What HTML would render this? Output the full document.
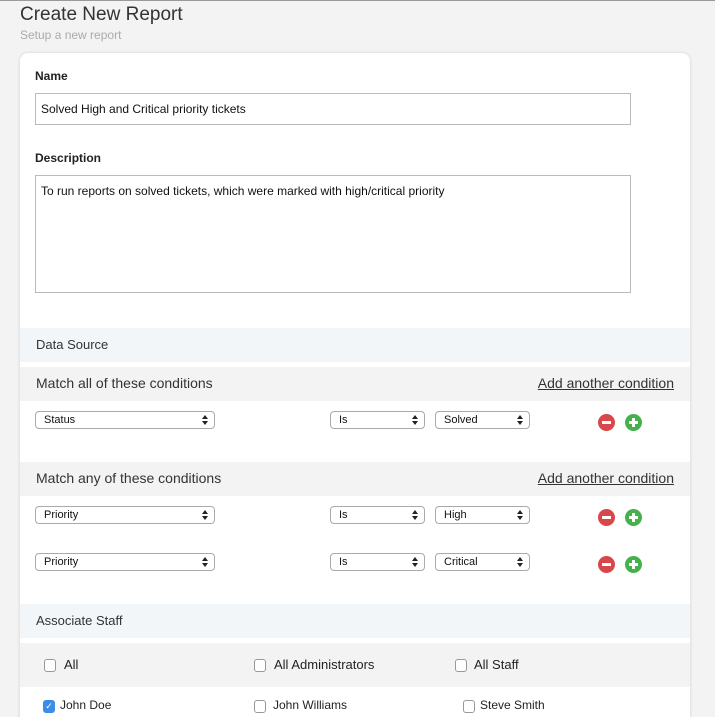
<!DOCTYPE html>
<html style="overflow:hidden;height:717px"><head><style>
*{box-sizing:border-box;margin:0;padding:0}
body{width:715px;height:717px;overflow:hidden;background:#f3f3f3;font-family:"Liberation Sans",sans-serif;position:relative;border-top:1px solid #9a9a9a}
.a{position:absolute}
h1{position:absolute;left:20px;top:3px;font-size:19px;font-weight:normal;color:#333}
.sub{left:20px;top:27px;font-size:12px;color:#aaa}
.card{left:20px;top:52px;width:670px;height:700px;background:#fff;border-radius:8px;box-shadow:0 0 3px rgba(0,0,0,.15)}
.lbl{font-size:12px;font-weight:bold;color:#222}
.inp{border:1px solid #bbb;background:#fff;font-size:12px;color:#111;padding:8px 5px}
.band{left:20px;width:670px;height:34px;font-size:13px;color:#333;padding:9px 16px}
.band.m{font-size:14px;padding-top:8px}
.blue{background:#f2f6f8}.grey{background:#f3f3f3}
.link{right:16px;top:8px;text-decoration:underline;color:#333}
.sel{height:18px;border:1px solid #aaa;border-radius:4px;font-size:11px;color:#111;padding:2px 8px;background:#fff}
.sel:after{content:"";position:absolute;right:6px;top:3px;border:3px solid transparent;border-bottom:4px solid #222;border-top:none}
.sel:before{content:"";position:absolute;right:6px;top:9px;border:3px solid transparent;border-top:4px solid #222;border-bottom:none}
.ic{width:17px;height:17px;border-radius:50%}
.ic.r{background:#d9474b}.ic.g{background:#44b14a}
.ic i{position:absolute;left:4px;top:7px;width:9px;height:3px;background:#fff}
.ic b{position:absolute;left:7px;top:4px;width:3px;height:9px;background:#fff}
.cb{width:12px;height:13px;border:1px solid #999;border-radius:3px;background:#fff}
.ck{font-size:12px;color:#222}
</style></head><body>
<h1>Create New Report</h1>
<div class="a sub">Setup a new report</div>
<div class="a card"></div>
<div class="a lbl" style="left:35px;top:68px">Name</div>
<div class="a inp" style="left:35px;top:92px;width:596px;height:32px">Solved High and Critical priority tickets</div>
<div class="a lbl" style="left:35px;top:150px">Description</div>
<div class="a inp" style="left:35px;top:174px;width:596px;height:118px">To run reports on solved tickets, which were marked with high/critical priority</div>
<div class="a band blue" style="top:327px">Data Source</div>
<div class="a band grey m" style="top:366px">Match all of these conditions<span class="a link">Add another condition</span></div>
<div class="a band grey m" style="top:461px">Match any of these conditions<span class="a link">Add another condition</span></div>

<div class="a sel" style="left:35px;top:410px;width:180px">Status</div>
<div class="a sel" style="left:330px;top:410px;width:95px">Is</div>
<div class="a sel" style="left:435px;top:410px;width:95px">Solved</div>
<div class="a ic r" style="left:598px;top:413px"><i></i></div>
<div class="a ic g" style="left:625px;top:413px"><i></i><b></b></div>

<div class="a sel" style="left:35px;top:505px;width:180px">Priority</div>
<div class="a sel" style="left:330px;top:505px;width:95px">Is</div>
<div class="a sel" style="left:435px;top:505px;width:95px">High</div>
<div class="a ic r" style="left:598px;top:508px"><i></i></div>
<div class="a ic g" style="left:625px;top:508px"><i></i><b></b></div>

<div class="a sel" style="left:35px;top:552px;width:180px">Priority</div>
<div class="a sel" style="left:330px;top:552px;width:95px">Is</div>
<div class="a sel" style="left:435px;top:552px;width:95px">Critical</div>
<div class="a ic r" style="left:598px;top:555px"><i></i></div>
<div class="a ic g" style="left:625px;top:555px"><i></i><b></b></div>

<div class="a band blue" style="top:603px">Associate Staff</div>
<div class="a grey" style="left:20px;top:642px;width:670px;height:44px"></div>
<div class="a cb" style="left:44px;top:658px"></div><div class="a ck" style="left:64px;top:656px;font-size:13px">All</div>
<div class="a cb" style="left:254px;top:658px"></div><div class="a ck" style="left:274px;top:656px;font-size:13px">All Administrators</div>
<div class="a cb" style="left:455px;top:658px"></div><div class="a ck" style="left:474px;top:656px;font-size:13px">All Staff</div>
<div class="a cb" style="left:43px;top:699px;background:#3b8ee8;border-color:#3b8ee8;color:#fff;font-size:9px;line-height:11px;text-align:center">✓</div><div class="a ck" style="left:60px;top:697px">John Doe</div>
<div class="a cb" style="left:254px;top:699px"></div><div class="a ck" style="left:273px;top:697px">John Williams</div>
<div class="a cb" style="left:463px;top:699px"></div><div class="a ck" style="left:480px;top:697px">Steve Smith</div>
</body></html>
